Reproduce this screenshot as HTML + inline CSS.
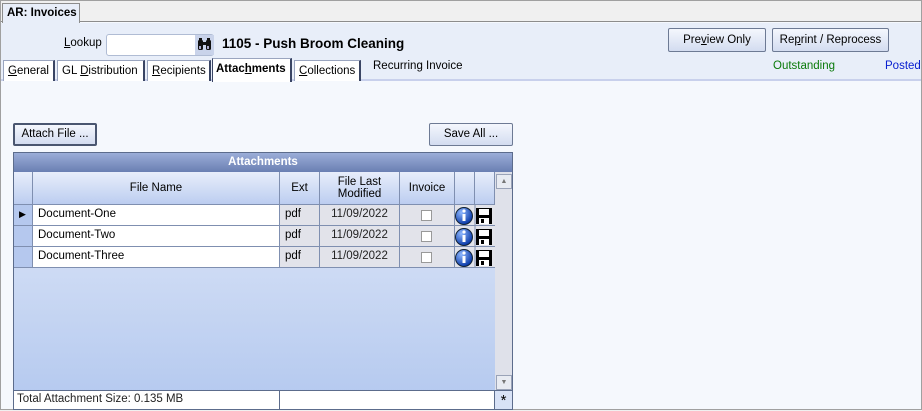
<!DOCTYPE html>
<html><head><style>
*{box-sizing:border-box;margin:0;padding:0}
body{width:922px;height:410px;overflow:hidden;font-family:"Liberation Sans",sans-serif;font-size:11.5px;color:#000;background:#f0f0f0;position:relative}
.a{position:absolute;white-space:nowrap}
.btn{position:absolute;border:1px solid #6d7a94;background:linear-gradient(#f4f7fd,#d3dcf0);text-align:center;line-height:20px;border-radius:2px;white-space:nowrap}
.tab{position:absolute;top:60px;height:21px;border:1px solid #9aa5bf;border-bottom:none;border-right:2px solid #3a4564;background:#fff;padding:4px 0 0 4px;white-space:nowrap;overflow:hidden}
.hd{position:absolute;top:172px;height:33px;border-right:1px solid #7f8fb0;border-bottom:1px solid #7f8fb0;text-align:center;background:linear-gradient(#e8eefb,#bccdf0);display:flex;align-items:center;justify-content:center;line-height:12px}
.c{position:absolute;height:21px;border-right:1px solid #7f8fb0;border-bottom:1px solid #7f8fb0;line-height:18px;padding-left:5px;white-space:nowrap}
</style></head><body>
<div class="a" style="left:0;top:0;width:922px;height:410px;border:1px solid #a0a0a0;background:#f5f8fd"></div>
<div class="a" style="left:1px;top:1px;width:920px;height:21px;background:#f0f0f0;border-bottom:1px solid #8c8c8c"></div>
<div class="a" style="left:2px;top:3px;width:78px;height:20px;background:#e8eef9;border:1px solid #8c8c8c;border-bottom:none;font-weight:bold;padding:3px 0 0 4px;font-size:11.5px">AR: Invoices</div>
<div class="a" style="left:1px;top:23px;width:920px;height:58px;background:#e8eef9;border-bottom:2px solid #c8d0ec"></div>
<div class="a" style="left:64px;top:37px"><u>L</u>ookup</div>
<div class="a" style="left:106px;top:34px;width:108px;height:22px;border:1px solid #b0bcd4;border-radius:3px;background:#fff"></div>
<svg class="a" style="left:195px;top:35px" width="19" height="20"><rect width="19" height="20" fill="#c9d3ea"/>
<g fill="#111"><rect x="3" y="5" width="5" height="10" rx="1.5"/><rect x="11" y="5" width="5" height="10" rx="1.5"/><rect x="7" y="7" width="5" height="3"/><rect x="4" y="3" width="3" height="3"/><rect x="12" y="3" width="3" height="3"/></g>
<rect x="4" y="11" width="2" height="3" fill="#aac"/><rect x="12" y="11" width="2" height="3" fill="#aac"/></svg>
<div class="a" style="left:222px;top:36px;font-weight:bold;font-size:13.5px">1105 - Push Broom Cleaning</div>
<div class="btn" style="left:668px;top:28px;width:98px;height:24px;line-height:22px">Pre<u>v</u>iew Only</div>
<div class="btn" style="left:772px;top:28px;width:117px;height:24px;line-height:22px">Re<u>p</u>rint / Reprocess</div>
<div class="a" style="left:773px;top:60px;color:#0a7a0a">Outstanding</div>
<div class="a" style="left:885px;top:60px;color:#0a20d0">Posted</div>
<div class="tab" style="left:3px;width:52px"><u>G</u>eneral</div>
<div class="tab" style="left:57px;width:88px">GL <u>D</u>istribution</div>
<div class="tab" style="left:147px;width:64px"><u>R</u>ecipients</div>
<div class="tab" style="left:212px;width:80px;top:58px;height:24px;font-weight:bold;border-left:1px solid #3a4564;padding-left:3px">Attac<u>h</u>ments</div>
<div class="tab" style="left:294px;width:67px"><u>C</u>ollections</div>
<div class="a" style="left:373px;top:60px">Recurring Invoice</div>
<div class="btn" style="left:13px;top:123px;width:84px;height:23px;border:2px solid #4a5670;line-height:19px">Attach File ...</div>
<div class="btn" style="left:429px;top:123px;width:84px;height:23px;line-height:21px">Save All ...</div>
<div class="a" style="left:13px;top:152px;width:500px;height:258px;border:1px solid #5c6c8c;background:linear-gradient(#e3eaf8,#b3c8ef)"></div>
<div class="a" style="left:14px;top:153px;width:498px;height:19px;background:linear-gradient(#9badd8,#6a7fb2);color:#fff;font-weight:bold;text-align:center;line-height:19px">Attachments</div>
<div class="hd" style="left:14px;width:19px"></div>
<div class="hd" style="left:33px;width:247px">File Name</div>
<div class="hd" style="left:280px;width:40px">Ext</div>
<div class="hd" style="left:320px;width:80px">File Last<br>Modified</div>
<div class="hd" style="left:400px;width:55px">Invoice</div>
<div class="hd" style="left:455px;width:20px"></div>
<div class="hd" style="left:475px;width:20px"></div>
<div class="a" style="left:495px;top:172px;width:17px;height:218px;background:#dfe1ea"></div>
<div class="a" style="left:496px;top:174px;width:16px;height:15px;border:1px solid #9aa3b8;background:#e8ebf2;font-size:7px;color:#777;text-align:center;line-height:13px">▲</div>
<div class="a" style="left:496px;top:375px;width:16px;height:15px;border:1px solid #9aa3b8;background:#e8ebf2;font-size:7px;color:#777;text-align:center;line-height:13px">▼</div>
<div class="c" style="left:14px;top:205px;width:19px;background:#b5c8ee;font-size:9px;padding-left:5px">▶</div>
<div class="c" style="left:33px;top:205px;width:247px;background:#fff">Document-One</div>
<div class="c" style="left:280px;top:205px;width:40px;background:#e2e3ea">pdf</div>
<div class="c" style="left:320px;top:205px;width:80px;background:#e2e3ea;text-align:center;padding:0;color:#222">11/09/2022</div>
<div class="c" style="left:400px;top:205px;width:55px;background:#e2e3ea"><div class="a" style="left:21px;top:5px;width:11px;height:11px;border:1px solid #999;background:#fff"></div></div>
<div class="c" style="left:14px;top:226px;width:19px;background:#b5c8ee"></div>
<div class="c" style="left:33px;top:226px;width:247px;background:#fff">Document-Two</div>
<div class="c" style="left:280px;top:226px;width:40px;background:#e2e3ea">pdf</div>
<div class="c" style="left:320px;top:226px;width:80px;background:#e2e3ea;text-align:center;padding:0;color:#222">11/09/2022</div>
<div class="c" style="left:400px;top:226px;width:55px;background:#e2e3ea"><div class="a" style="left:21px;top:5px;width:11px;height:11px;border:1px solid #999;background:#fff"></div></div>
<div class="c" style="left:14px;top:247px;width:19px;background:#b5c8ee"></div>
<div class="c" style="left:33px;top:247px;width:247px;background:#fff">Document-Three</div>
<div class="c" style="left:280px;top:247px;width:40px;background:#e2e3ea">pdf</div>
<div class="c" style="left:320px;top:247px;width:80px;background:#e2e3ea;text-align:center;padding:0;color:#222">11/09/2022</div>
<div class="c" style="left:400px;top:247px;width:55px;background:#e2e3ea"><div class="a" style="left:21px;top:5px;width:11px;height:11px;border:1px solid #999;background:#fff"></div></div>
<svg class="a" style="left:455px;top:205px" width="40" height="63">
<defs><radialGradient id="g" cx="0.35" cy="0.3" r="0.7"><stop offset="0" stop-color="#8fb8ff"/><stop offset="1" stop-color="#0a3aa8"/></radialGradient></defs>
<g id="r">
<rect x="0" y="0" width="20" height="21" fill="#e2e3ea"/>
<circle cx="9" cy="11" r="8.5" fill="url(#g)" stroke="#123"/>
<rect x="7.5" y="9" width="3" height="7" fill="#fff"/><circle cx="9" cy="6" r="1.6" fill="#fff"/>
<rect x="20" y="0" width="20" height="21" fill="#e2e3ea"/>
<rect x="21" y="3" width="16" height="16" fill="#000"/><rect x="24" y="4" width="10" height="6" fill="#fff"/><rect x="24" y="13" width="10" height="6" fill="#fff"/><rect x="26" y="14" width="3" height="4" fill="#000"/>
<line x1="20" y1="0" x2="20" y2="21" stroke="#7f8fb0"/><line x1="0" y1="20.5" x2="40" y2="20.5" stroke="#7f8fb0"/>
</g>
<use href="#r" y="21"/><use href="#r" y="42"/>
</svg>
<div class="a" style="left:14px;top:390px;width:266px;height:19px;background:#fff;border-top:1px solid #5c6c8c;border-right:1px solid #5c6c8c;padding:2px 0 0 3px;color:#222">Total Attachment Size: 0.135 MB</div>
<div class="a" style="left:280px;top:390px;width:215px;height:19px;background:#fff;border-top:1px solid #5c6c8c;border-right:1px solid #5c6c8c"></div>
<div class="a" style="left:495px;top:390px;width:17px;height:19px;background:#d8e2f6;border-top:1px solid #5c6c8c;text-align:center;font-size:15px;line-height:20px">*</div>
</body></html>
